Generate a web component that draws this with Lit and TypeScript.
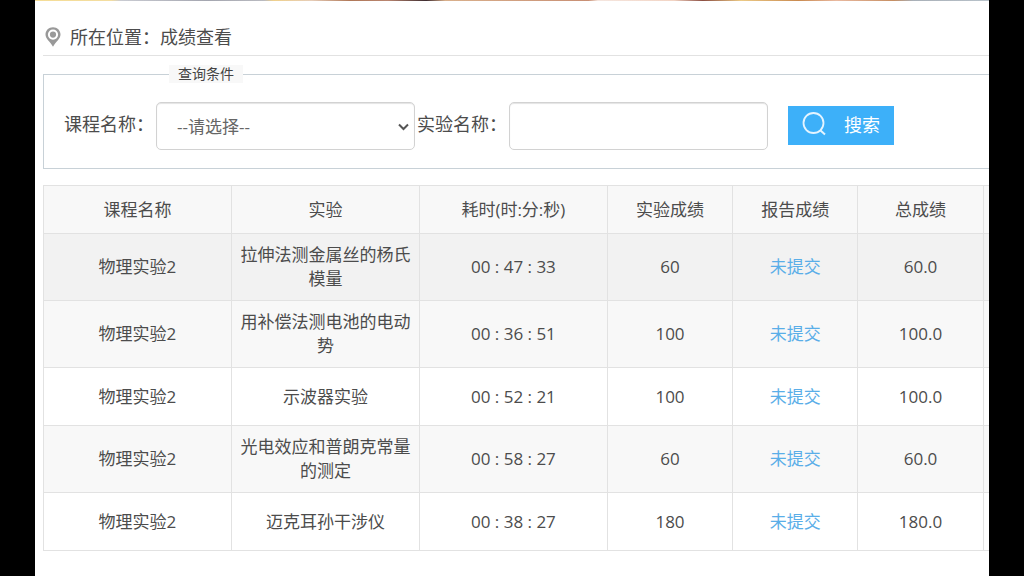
import { LitElement, html, css } from "lit";
import { customElement, state } from "lit/decorators.js";

interface Score {
  course: string;
  experiment: string;
  time: string;
  score: string;
  report: string;
  total: string;
}

const SCORES: Score[] = [
  { course: "物理实验2", experiment: "拉伸法测金属丝的杨氏模量", time: "00 : 47 : 33", score: "60", report: "未提交", total: "60.0" },
  { course: "物理实验2", experiment: "用补偿法测电池的电动势", time: "00 : 36 : 51", score: "100", report: "未提交", total: "100.0" },
  { course: "物理实验2", experiment: "示波器实验", time: "00 : 52 : 21", score: "100", report: "未提交", total: "100.0" },
  { course: "物理实验2", experiment: "光电效应和普朗克常量的测定", time: "00 : 58 : 27", score: "60", report: "未提交", total: "60.0" },
  { course: "物理实验2", experiment: "迈克耳孙干涉仪", time: "00 : 38 : 27", score: "180", report: "未提交", total: "180.0" },
];

@customElement("search-panel")
export class SearchPanel extends LitElement {
  static styles = css`
    :host {
      display: block;
    }
    .panel {
      margin: 0;
      padding: 0;
      min-width: 0;
      border: 1px solid #c8d1d7;
      border-right: 0;
    }
    .legend {
      margin-left: 125px;
      padding: 0 9px;
      font-size: 14px;
      line-height: 18px;
      background: #f8f8f8;
      color: #444;
    }
    .form {
      display: flex;
      align-items: center;
      padding: 19px 20px 18px;
    }
    .label {
      flex: none;
      padding-bottom: 4px;
      font-size: 18px;
      line-height: 24px;
    }
    .field {
      position: relative;
      flex: 0 1 259px;
      min-width: 0;
      margin: 0 2px;
    }
    .control {
      box-sizing: border-box;
      display: block;
      width: 100%;
      height: 48px;
      padding: 0 20px;
      border: 1px solid #d2d2d2;
      border-radius: 5px;
      background: #fff;
      box-shadow: inset 0 1px 1px #e4e4e4;
      color: #666;
      font-family: inherit;
      font-size: 17px;
      appearance: none;
      outline: none;
    }
    .chevron {
      position: absolute;
      right: 5px;
      top: 20px;
      pointer-events: none;
    }
    .search {
      flex: none;
      display: flex;
      align-items: center;
      gap: 18px;
      height: 39px;
      margin: 0 0 2px 18px;
      padding: 0 14px;
      border: 0;
      background: #3db0f9;
      color: #fff;
      font-family: inherit;
      font-size: 18px;
      line-height: 24px;
    }
    .glass {
      display: block;
      margin-bottom: 2px;
    }
  `;

  render() {
    return html`
      <fieldset class="panel">
        <legend class="legend">查询条件</legend>
        <div class="form">
          <label class="label" for="course">课程名称：</label>
          <div class="field">
            <select class="control" id="course">
              <option>--请选择--</option>
            </select>
            <svg class="chevron" width="13" height="10" viewBox="0 0 13 10" aria-hidden="true">
              <path d="M2 2.5 L6.5 7 L11 2.5" fill="none" stroke="#555" stroke-width="2" />
            </svg>
          </div>
          <label class="label" for="experiment">实验名称：</label>
          <div class="field">
            <input class="control" id="experiment" type="text" />
          </div>
          <button class="search" type="button">
            <svg class="glass" width="24" height="24" viewBox="0 0 24 24" aria-hidden="true">
              <circle cx="11.5" cy="11" r="10" fill="none" stroke="#e4f4ff" stroke-width="1.8" />
              <path d="M18 18 L23 22.5" fill="none" stroke="#e4f4ff" stroke-width="2" />
            </svg>
            <span>搜索</span>
          </button>
        </div>
      </fieldset>
    `;
  }
}

@customElement("score-table")
export class ScoreTable extends LitElement {
  @state() private rows: Score[] = SCORES;

  static styles = css`
    :host {
      display: block;
    }
    .table {
      width: 100%;
      table-layout: fixed;
      border-collapse: collapse;
      font-size: 17px;
      line-height: 24px;
      text-align: center;
    }
    .wide {
      width: 19.88%;
    }
    .narrow {
      width: 13.25%;
    }
    .cell {
      box-sizing: border-box;
      padding: 9px 8px;
      border: 1px solid #e2e2e2;
      font-weight: normal;
    }
    .row .cell {
      height: 58px;
    }
    .head .cell {
      height: 48px;
    }
    .head .cut,
    .row .cut {
      padding: 0;
      border-right: 0;
    }
    .head,
    .row:nth-child(2),
    .row:nth-child(4) {
      background: #f8f8f8;
    }
    .row:nth-child(1) {
      background: #f2f2f2;
    }
    .link {
      color: #5aaee8;
      text-decoration: none;
    }
  `;

  render() {
    return html`
      <table class="table">
        <colgroup>
          <col class="wide" /><col class="wide" /><col class="wide" />
          <col class="narrow" /><col class="narrow" /><col class="narrow" />
          <col />
        </colgroup>
        <thead>
          <tr class="head">
            ${["课程名称", "实验", "耗时(时:分:秒)", "实验成绩", "报告成绩", "总成绩"].map(
              (title) => html`<th class="cell" scope="col">${title}</th>`
            )}
            <td class="cell cut"></td>
          </tr>
        </thead>
        <tbody>
          ${this.rows.map(
            (r) => html`
              <tr class="row">
                <td class="cell">${r.course}</td>
                <td class="cell">${r.experiment}</td>
                <td class="cell">${r.time}</td>
                <td class="cell">${r.score}</td>
                <td class="cell"><a class="link" href="#">${r.report}</a></td>
                <td class="cell">${r.total}</td>
                <td class="cell cut"></td>
              </tr>
            `
          )}
        </tbody>
      </table>
    `;
  }
}

@customElement("app-root")
export class AppRoot extends LitElement {
  static styles = css`
    :host {
      display: flex;
      box-sizing: border-box;
      min-height: 100vh;
      padding: 0 35px;
      background: #000;
      color: #4c4c4c;
      font-family: "Open Sans", "Noto Sans CJK SC", sans-serif;
    }
    .page {
      flex: 1;
      min-width: 0;
      background: #fff;
    }
    .banner {
      height: 1px;
      background: linear-gradient(
        90deg,
        #f5dd96 0%,
        #f3dda0 8%,
        #c9cbd2 9%,
        #a4a6b0 18%,
        #b9bac0 24%,
        #efd08c 25%,
        #e6cdb8 29%,
        #b07858 33%,
        #b98570 37%,
        #3e2c30 41%,
        #d9b08c 43%,
        #c88f74 58%,
        #f5e6df 59%,
        #f2d4c4 67%,
        #8c4f43 70%,
        #ecca86 74%,
        #c98a50 80%,
        #e9b9a0 84%,
        #c68e62 90%,
        #a9b0b8 92%,
        #b8c2ca 100%
      );
    }
    .content {
      display: flex;
      flex-direction: column;
      padding-left: 8px;
    }
    .location {
      display: flex;
      align-items: center;
      gap: 9px;
      padding: 24px 2px 6px;
      border-bottom: 1px solid #e2e2e2;
      font-size: 18px;
      line-height: 24px;
    }
    .query {
      margin-top: 9px;
    }
    .scores {
      margin-top: 16px;
    }
  `;

  render() {
    return html`
      <main class="page">
        <div class="banner"></div>
        <div class="content">
          <div class="location">
            <svg width="16" height="20" viewBox="0 0 16 20" aria-hidden="true">
              <path
                d="M8 0.3 C3.7 0.3 0.5 3.5 0.5 7.6 C0.5 11.8 4.8 14.5 8 19.7 C11.2 14.5 15.5 11.8 15.5 7.6 C15.5 3.5 12.3 0.3 8 0.3 Z"
                fill="#999"
              />
              <circle cx="8" cy="7.6" r="4.1" fill="none" stroke="#fff" stroke-width="2" />
            </svg>
            <span>所在位置：成绩查看</span>
          </div>
          <search-panel class="query"></search-panel>
          <score-table class="scores"></score-table>
        </div>
      </main>
    `;
  }
}
